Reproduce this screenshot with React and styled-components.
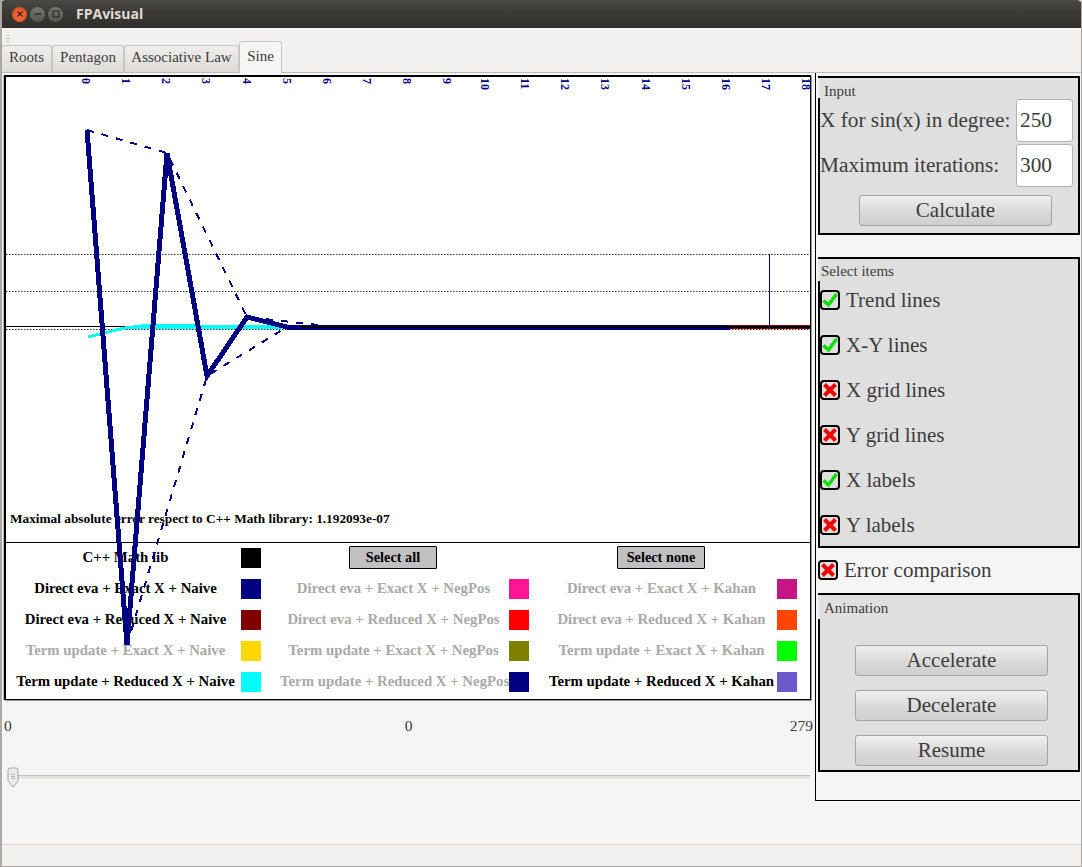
import React from "react";
import styled, { createGlobalStyle } from "styled-components";

const colors = {
    text: '#3c3c3c', muted: '#a9a9a9', panel: '#dfdfdf', page: '#f5f5f5', bar: '#f2f1f0', navy: '#000080',
}

const tabs = [
    {name: 'Roots', width: 51},
    {name: 'Pentagon', width: 72},
    {name: 'Associative Law', width: 115},
    {name: 'Sine', width: 43, active: true},
]

const legend = [
    [
        {label: 'C++ Math lib', color: '#000000', on: true},
        {button: 'Select all'},
        {button: 'Select none'},
    ],
    [
        {label: 'Direct eva + Exact X + Naive', color: '#000080', on: true},
        {label: 'Direct eva + Exact X + NegPos', color: '#ff1493'},
        {label: 'Direct eva + Exact X + Kahan', color: '#c71585'},
    ],
    [
        {label: 'Direct eva + Reduced X + Naive', color: '#800000', on: true},
        {label: 'Direct eva + Reduced X + NegPos', color: '#ff0000'},
        {label: 'Direct eva + Reduced X + Kahan', color: '#ff4500'},
    ],
    [
        {label: 'Term update + Exact X + Naive', color: '#ffd700'},
        {label: 'Term update + Exact X + NegPos', color: '#808000'},
        {label: 'Term update + Exact X + Kahan', color: '#00ff00'},
    ],
    [
        {label: 'Term update + Reduced X + Naive', color: '#00ffff', on: true},
        {label: 'Term update + Reduced X + NegPos', color: '#000080'},
        {label: 'Term update + Reduced X + Kahan', color: '#6a5acd', on: true},
    ],
]

const items = [
    {name: 'Trend lines', on: true},
    {name: 'X-Y lines', on: true},
    {name: 'X grid lines'},
    {name: 'Y grid lines'},
    {name: 'X labels', on: true},
    {name: 'Y labels'},
]

function Tick({on}) {
    return (
        <CheckBox>
            <svg width="18" height="18" viewBox="0 0 18 18">
                {on
                    ? <path d="M2.5 9.5 L7.5 14 L15.5 3" fill="none" stroke="#00e000" strokeWidth="3.5"/>
                    : <path d="M3.5 3.5 L14.5 14.5 M14.5 3.5 L3.5 14.5" fill="none" stroke="#f00000" strokeWidth="4"/>}
            </svg>
        </CheckBox>
    )
}

function Chart() {
    const ticks = Array.from({length: 19}, (_, i) => i)
    return (
        <ChartSvg viewBox="4 75 807 625">
            <g stroke="#333" strokeWidth="1" strokeDasharray="1.5 1.5">
                <line x1="6" y1="254.5" x2="810" y2="254.5"/>
                <line x1="6" y1="291.5" x2="810" y2="291.5"/>
                <line x1="6" y1="329.5" x2="810" y2="329.5"/>
            </g>
            <line x1="6" y1="326.5" x2="810" y2="326.5" stroke="#000" strokeWidth="1"/>
            <line x1="769.5" y1="254" x2="769.5" y2="326" stroke={colors.navy} strokeWidth="1"/>
            <g shapeRendering="crispEdges">
                <polyline points="88,337 100,334 112,331 125,328 145,325.5 300,327" fill="none"
                          stroke="#00ffff" strokeWidth="3"/>
                <line x1="125" y1="327.5" x2="290" y2="327.5" stroke="#00ffff" strokeWidth="3"/>
                <polyline points="87,130 167,153 247,317 327,326 407,327 810,327" fill="none"
                          stroke={colors.navy} strokeWidth="2" strokeDasharray="7 8"/>
                <polyline points="127,645 207,376 287,327 367,327 810,327" fill="none"
                          stroke={colors.navy} strokeWidth="2" strokeDasharray="7 8"/>
                <polyline points="87,130 127,645 167,153 207,376 247,317 287,327 730,327" fill="none"
                          stroke={colors.navy} strokeWidth="5"/>
                <line x1="730" y1="327" x2="810" y2="327" stroke="#800000" strokeWidth="4"/>
                <line x1="300" y1="327" x2="810" y2="327" stroke="#000" strokeWidth="2"/>
            </g>
            <g fill={colors.navy} fontFamily="Liberation Serif" fontWeight="700" fontSize="12">
                {ticks.map(i => {
                    const x = 82 + i * 40.15 - (i >= 10 ? 2.5 : 0)
                    return <text key={i} x={x} y="78" transform={`rotate(90 ${x} 78)`}>{i}</text>
                })}
            </g>
        </ChartSvg>
    )
}

export default function App() {
    return (
        <Window>
            <GlobalStyle/>
            <TitleBar>
                <WindowButton kind="close"><svg width="8" height="8" viewBox="0 0 8 8"><path d="M1.5 1.5 L6.5 6.5 M6.5 1.5 L1.5 6.5" stroke="#4a1a08" strokeWidth="1.2"/></svg></WindowButton>
                <WindowButton><svg width="8" height="8" viewBox="0 0 8 8"><path d="M0.5 4 H7.5" stroke="#2e2d29" strokeWidth="1.4"/></svg></WindowButton>
                <WindowButton><svg width="8" height="8" viewBox="0 0 8 8"><rect x="1" y="1" width="6" height="6" fill="none" stroke="#2e2d29" strokeWidth="1.2"/></svg></WindowButton>
                <Title>FPAvisual</Title>
            </TitleBar>
            <HandleBar>
                <svg width="6" height="10" viewBox="0 0 6 10"><path d="M1 1.5 H5 M1 4.5 H5 M1 7.5 H5" stroke="#cfcdca" strokeWidth="1"/></svg>
            </HandleBar>
            <TabBar>
                {tabs.map(t => <Tab key={t.name} $width={t.width} $active={t.active}>{t.name}</Tab>)}
            </TabBar>
            <Main>
                <LeftColumn>
                    <ChartPanel>
                        <PlotArea>
                            <ErrorText>Maximal absolute error respect to C++ Math library: 1.192093e-07</ErrorText>
                        </PlotArea>
                        <Legend>
                            {legend.flat().map((c, i) => (
                                <LegendCell key={i} $center={!!c.button}>
                                    {c.button
                                        ? <SmallButton>{c.button}</SmallButton>
                                        : <>
                                            <LegendLabel $on={c.on}>{c.label}</LegendLabel>
                                            <Swatch $color={c.color}/>
                                        </>}
                                </LegendCell>
                            ))}
                        </Legend>
                        <Chart/>
                    </ChartPanel>
                    <SliderLabels>
                        <span>0</span>
                        <span>0</span>
                        <span>279</span>
                    </SliderLabels>
                    <SliderTrack>
                        <SliderThumb viewBox="0 0 12 21" width="12" height="21">
                            <path d="M1 3 Q1 1 3 1 H9 Q11 1 11 3 V14 L6 20 L1 14 Z" fill="#ececec" stroke="#a8a6a2" strokeWidth="1"/>
                            <path d="M4 7.5 H8 M4 9.5 H8 M4 11.5 H8" stroke="#b5b3af" strokeWidth="1"/>
                        </SliderThumb>
                    </SliderTrack>
                </LeftColumn>
                <Sidebar>
                    <Group $height={159}>
                        <GroupTitle $indent={4} $height={20}>Input</GroupTitle>
                        <InputRow>
                            <FieldLabel>X for sin(x) in degree:</FieldLabel>
                            <Field value="250" readOnly/>
                        </InputRow>
                        <InputRow>
                            <FieldLabel>Maximum iterations:</FieldLabel>
                            <Field value="300" readOnly/>
                        </InputRow>
                        <CenteredButton $shift={4} $top={7}>Calculate</CenteredButton>
                    </Group>
                    <Group $height={291} $top={22}>
                        <GroupTitle $indent={1} $height={22} $pad={3}>Select items</GroupTitle>
                        <ItemList>
                            {items.map(it => (
                                <CheckRow key={it.name}>
                                    <Tick on={it.on}/>
                                    <span>{it.name}</span>
                                </CheckRow>
                            ))}
                        </ItemList>
                    </Group>
                    <ErrorRow>
                        <Tick/>
                        <span>Error comparison</span>
                    </ErrorRow>
                    <Group $height={179}>
                        <GroupTitle $indent={4} $height={24}>Animation</GroupTitle>
                        <AnimationList>
                            <CenteredButton>Accelerate</CenteredButton>
                            <CenteredButton>Decelerate</CenteredButton>
                            <CenteredButton>Resume</CenteredButton>
                        </AnimationList>
                    </Group>
                </Sidebar>
            </Main>
            <StatusBar/>
        </Window>
    );
}

const GlobalStyle = createGlobalStyle`
  html, body {
    margin: 0;
    padding: 0;
    background: #fff;
  }

  * {
    box-sizing: border-box;
  }
`

const Window = styled.div`
  width: 1082px;
  height: 867px;
  display: flex;
  flex-direction: column;
  overflow: hidden;
  background: ${colors.page};
  font-family: "Liberation Serif", serif;
  color: ${colors.text};
  border-left: 2px solid #aca8a2;
  border-right: 1px solid #aca8a2;
  border-bottom: 1px solid #aca8a2;
`

const TitleBar = styled.div`
  height: 28px;
  margin: 0 -1px 0 -2px;
  flex: none;
  display: flex;
  align-items: center;
  padding: 0 0 0 12px;
  gap: 3px;
  background: linear-gradient(#4a4945, #3c3b37 40%, #2f2e2a);
  border-radius: 5px 5px 0 0;
`

const WindowButton = styled.div`
  width: 15px;
  height: 15px;
  border-radius: 50%;
  display: flex;
  align-items: center;
  justify-content: center;
  background: ${p => p.kind === 'close'
    ? 'radial-gradient(circle at 50% 60%, #f0703a, #d9481c)'
    : 'linear-gradient(#77766f, #56554f)'};
`

const Title = styled.div`
  margin: -2px 0 0 10px;
  font: 700 14px "Open Sans", sans-serif;
  color: #dfdbd2;
`

const HandleBar = styled.div`
  height: 14px;
  flex: none;
  padding: 2px 0 0 3px;
  background: ${colors.bar};
`

const TabBar = styled.div`
  height: 31px;
  flex: none;
  display: flex;
  align-items: flex-end;
  margin-left: -1px;
  background: ${colors.bar};
  border-bottom: 1px solid #bdbbb7;
`

const Tab = styled.div`
  width: ${p => p.$width}px;
  height: ${p => p.$active ? 32 : 28}px;
  margin-bottom: -1px;
  padding-bottom: 3px;
  display: flex;
  align-items: center;
  justify-content: center;
  font-size: 15px;
  border: 1px solid #c9c7c3;
  border-bottom: ${p => p.$active ? 'none' : '1px solid #bdbbb7'};
  border-radius: 3px 3px 0 0;
  background: ${p => p.$active ? colors.page : 'linear-gradient(#efeeec, #dedcd9)'};
`

const Main = styled.div`
  flex: 1;
  display: flex;
  align-items: flex-start;
  min-height: 0;
`

const LeftColumn = styled.div`
  width: 813px;
  flex: none;
  padding: 2px 0 0 2px;
`

const ChartPanel = styled.div`
  position: relative;
  width: 807px;
  height: 625px;
  display: flex;
  flex-direction: column;
  background: #fff;
  border: 1px solid #000;
  border-left-width: 2px;
  border-top-width: 2px;
  box-shadow: 1px 1px 0 #9a9a9a, -1px 0 0 #b5b5b5;
`

const ChartSvg = styled.svg`
  position: absolute;
  left: -2px;
  top: -2px;
  width: 807px;
  height: 625px;
  pointer-events: none;
`

const PlotArea = styled.div`
  height: 466px;
  flex: none;
  display: flex;
  align-items: flex-end;
  padding: 0 0 16px 4px;
  border-bottom: 1px solid #000;
`

const ErrorText = styled.div`
  font-size: 13.3px;
  font-weight: 700;
  line-height: 15px;
  color: #000;
  white-space: nowrap;
`

const Legend = styled.div`
  flex: 1;
  display: grid;
  grid-template-columns: repeat(3, 268px);
  grid-auto-rows: 31px;
  align-content: start;
  margin-top: -1px;
  padding: 0 0 0 6px;
`

const LegendCell = styled.div`
  display: flex;
  align-items: center;
  justify-content: ${p => p.$center ? 'flex-start' : 'space-between'};
  padding-left: ${p => p.$center ? 70 : 0}px;
  width: 249px;
`

const LegendLabel = styled.span`
  width: 227px;
  text-align: center;
  font-size: 14.8px;
  font-weight: 700;
  white-space: nowrap;
  color: ${p => p.$on ? '#000' : colors.muted};
`

const Swatch = styled.span`
  width: 20px;
  height: 20px;
  flex: none;
  background: ${p => p.$color};
`

const SmallButton = styled.button`
  width: 88px;
  height: 23px;
  padding: 0;
  margin-left: -1px;
  font: 700 14.3px "Liberation Serif", serif;
  color: #000;
  background: #c0c0c0;
  border: 1px solid #000;
  border-radius: 1px;
`

const SliderLabels = styled.div`
  display: grid;
  grid-template-columns: 1fr auto 1fr;
  padding: 17px 0 0 0;
  width: 809px;
  font-size: 15.5px;
  line-height: 18px;

  span:last-child {
    justify-self: end;
  }
`

const SliderTrack = styled.div`
  position: relative;
  height: 5px;
  width: 803px;
  margin: 40px 0 0 3px;
  background: #e2e1df;
  border-top: 1px solid #c4c2be;
  border-bottom: 1px solid #fbfbfb;
`

const SliderThumb = styled.svg`
  position: absolute;
  left: 0;
  top: -9px;
`

const Sidebar = styled.div`
  width: 265px;
  height: 728px;
  flex: none;
  padding: 3px 0 0 2px;
  border-left: 1px solid #000;
  border-bottom: 1px solid #000;
`

const Group = styled.div`
  width: 262px;
  height: ${p => p.$height}px;
  margin-top: ${p => p.$top || 0}px;
  background: ${colors.panel};
  border: 2px solid #000;
`

const GroupTitle = styled.div`
  height: ${p => p.$height}px;
  margin-left: -2px;
  padding: ${p => p.$pad || 4}px 0 0 ${p => p.$indent + 2}px;
  background: linear-gradient(90deg, #e8e8e8 2px, ${colors.panel} 2px);
  font-size: 15px;
  line-height: 18px;
`

const InputRow = styled.div`
  display: flex;
  align-items: center;
  justify-content: space-between;
  height: 45px;
  padding: 0 5px 0 0;
`

const FieldLabel = styled.span`
  font-size: 21.3px;
  white-space: nowrap;
`

const Field = styled.input`
  width: 57px;
  height: 43px;
  padding: 0 0 0 3px;
  font: 21.3px "Liberation Serif", serif;
  color: ${colors.text};
  background: #fff;
  border: 1px solid #b5b3af;
  border-radius: 3px;
  outline: none;
`

const CenteredButton = styled.button`
  display: block;
  width: 193px;
  height: 31px;
  margin: ${p => p.$top || 0}px 0 0 ${p => 35 + (p.$shift || 0)}px;
  padding: 0;
  font: 21px "Liberation Serif", serif;
  color: ${colors.text};
  background: linear-gradient(#efefef, #d8d8d8 60%, #cfcfcf);
  border: 1px solid #a5a3a0;
  border-radius: 3px;
`

const ItemList = styled.div`
  display: grid;
  grid-auto-rows: 45px;
  margin-top: -3px;
`

const CheckRow = styled.label`
  display: flex;
  align-items: center;
  gap: 6px;
  font-size: 21px;
`

const CheckBox = styled.span`
  width: 20px;
  height: 20px;
  flex: none;
  margin-top: -1px;
  display: flex;
  align-items: center;
  justify-content: center;
  background: ${colors.panel};
  border: 2px solid #000;
  border-radius: 4px;

  svg {
    margin: -1px;
  }
`

const ErrorRow = styled(CheckRow)`
  height: 46px;
  margin-top: -1px;
`

const AnimationList = styled.div`
  display: flex;
  flex-direction: column;
  gap: 14px;
  padding-top: 26px;
`

const StatusBar = styled.div`
  height: 22px;
  flex: none;
  margin-top: auto;
  background: ${colors.bar};
  border-top: 1px solid #d5d3cf;
`
